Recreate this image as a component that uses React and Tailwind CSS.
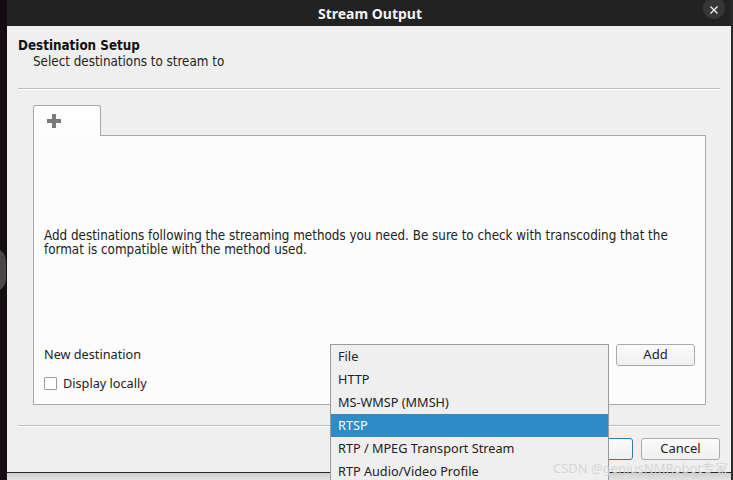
import React from 'react';

// Stream Output dialog - destination setup page with the method dropdown open

const ui = { fontFamily: '"DejaVu Sans Condensed", "DejaVu Sans", sans-serif' };
const qt = { fontFamily: '"Noto Sans", "Open Sans", sans-serif' };

const methods = [
  'File',
  'HTTP',
  'MS-WMSP (MMSH)',
  'RTSP',
  'RTP / MPEG Transport Stream',
  'RTP Audio/Video Profile',
];

function PlusIcon() {
  return (
    <svg width="14" height="14" viewBox="0 0 14 14" aria-hidden="true">
      <rect x="5" y="0" width="4" height="14" fill="#7a7a7a" />
      <rect x="0" y="5" width="14" height="4" fill="#7a7a7a" />
    </svg>
  );
}

function Button({ children, focused }) {
  return (
    <div
      className={`h-[22px] w-[79px] rounded-[3px] border flex items-center justify-center text-[13px] text-[#222] bg-gradient-to-b from-[#fbfbfb] to-[#f0f0f0] ${
        focused ? 'border-[#2b7bbd]' : 'border-[#ababab]'
      }`}
      style={qt}
    >
      {children}
    </div>
  );
}

export default function App() {
  return (
    <div className="relative w-[733px] h-[480px] overflow-hidden bg-[#140e12] flex">
      {/* desktop strip on the left */}
      <div className="relative w-[7px] shrink-0">
        <div className="absolute left-[-20px] top-[248px] w-[26px] h-[44px] rounded-full bg-[#4a4648]" />
      </div>

      {/* dialog window */}
      <div className="w-[724px] shrink-0 flex flex-col">
        <div className="relative h-[26px] bg-[#222222] flex items-center justify-center">
          <span className="text-[14px] font-bold text-[#f2f2f2] pl-[2px]" style={qt}>
            Stream Output
          </span>
          <div className="absolute left-[696px] top-[-3px] w-[22px] h-[22px] rounded-full bg-[#363636] flex items-center justify-center">
            <svg width="10" height="10" viewBox="0 0 10 10" className="mt-[4px]">
              <path d="M1.5 1.5 L8.5 8.5 M8.5 1.5 L1.5 8.5" stroke="#f0f0f0" strokeWidth="1.4" />
            </svg>
          </div>
        </div>

        <div className="h-[446px] bg-[#efefef] flex flex-col" style={ui}>
          <div className="pt-[12px] pl-[11px] text-[13.3px] font-bold text-[#111] leading-[15px]">
            Destination Setup
          </div>
          <div className="pl-[26px] text-[13.3px] text-[#222] leading-[17px]">
            Select destinations to stream to
          </div>

          <div className="mt-[18px] mx-[11px] h-[2px] border-t border-[#bdbdbd] border-b border-b-white" />

          {/* tab + panel */}
          <div className="mt-[15px] ml-[26px] w-[673px] flex flex-col">
            <div className="w-[68px] h-[31px] -mb-px relative z-10 bg-gradient-to-b from-white to-[#fcfcfc] border border-b-0 border-[#a8a8a8] rounded-t-[3px] flex pl-[13px] pt-[8px]">
              <PlusIcon />
            </div>
            <div className="h-[270px] bg-[#fcfcfc] border border-[#a8a8a8] flex flex-col px-[10px]">
              <div className="mt-[93px] text-[13.3px] leading-[14px] text-[#222]">
                Add destinations following the streaming methods you need. Be sure to check with transcoding that the
                <br />
                format is compatible with the method used.
              </div>
              <div className="flex-1" />
              <div className="flex items-center justify-between h-[22px]" style={qt}>
                <span className="text-[12.7px] text-[#222]">New destination</span>
                <Button>Add</Button>
              </div>
              <div className="mt-[8px] mb-[11px] flex items-center gap-[6px]" style={qt}>
                <div className="w-[13px] h-[13px] border border-[#9c9c9c] bg-white rounded-[1px]" />
                <span className="text-[12.7px] text-[#222]">Display locally</span>
              </div>
            </div>
          </div>

          <div className="mt-[20px] mx-[11px] h-[2px] border-t border-[#bdbdbd] border-b border-b-white" />

          <div className="mt-[11px] mr-[11px] flex justify-end gap-[8px]">
            <Button focused>Next</Button>
            <Button>Cancel</Button>
          </div>
        </div>

        <div className="h-px bg-[#2a2a2a]" />
        <div className="flex-1 bg-gradient-to-b from-[#cfcfcf] to-[#e2e2e2]" />
      </div>
      <div className="flex-1 bg-[#2b2b2b]" />

      {/* open dropdown list */}
      <div
        className="absolute left-[330px] top-[344px] w-[279px] h-[150px] bg-[#efefef] border border-[#9a9a9a]"
        style={qt}
      >
        {methods.map((m) => (
          <div
            key={m}
            className={`h-[23px] flex items-center pl-[7px] text-[12.7px] ${
              m === 'RTSP' ? 'bg-[#308cc6] text-white' : 'text-[#222]'
            }`}
          >
            {m}
          </div>
        ))}
      </div>

      {/* watermark */}
      <div
        className="absolute left-[553px] top-[459px] text-[13px] text-[#d4d4d4] opacity-90"
        style={{ fontFamily: '"Noto Sans", "Noto Sans CJK SC", sans-serif' }}
      >
        CSDN @geniusNMRobot专家
      </div>
    </div>
  );
}
